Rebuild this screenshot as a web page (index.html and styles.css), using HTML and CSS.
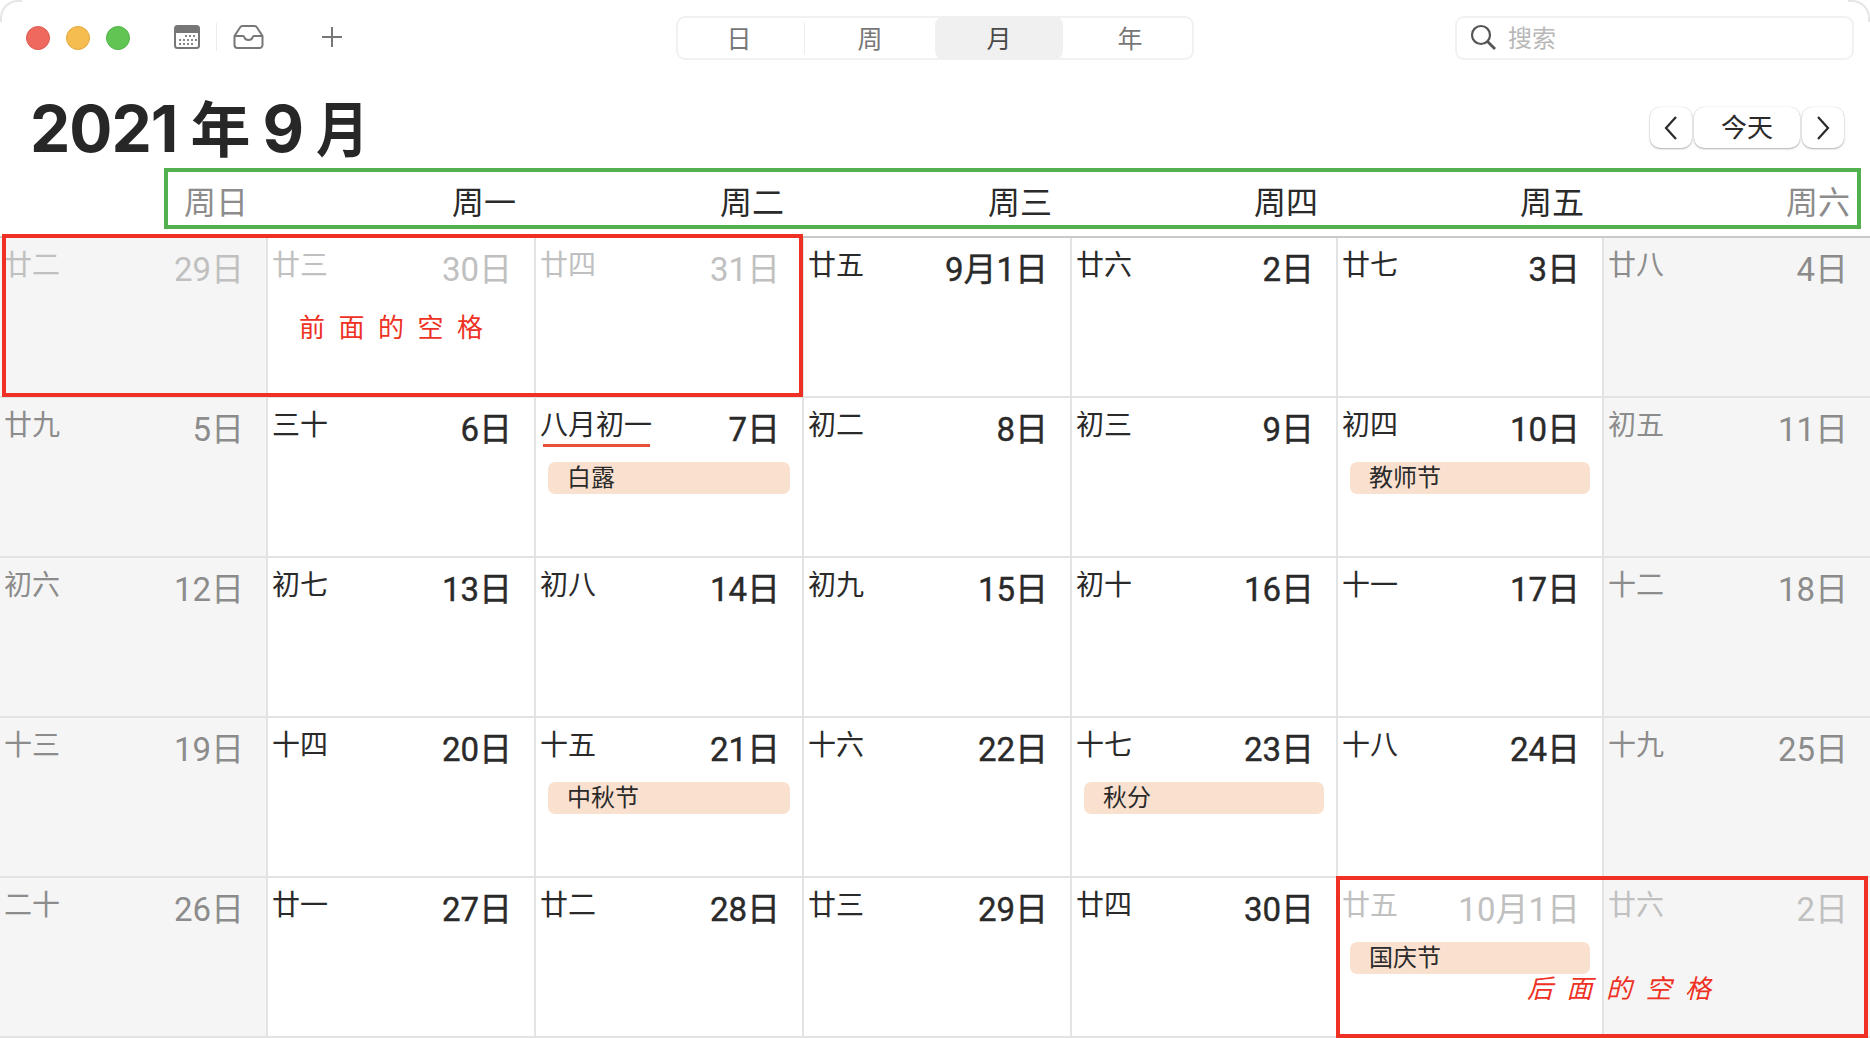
FILE: index.html
```html
<!DOCTYPE html>
<html lang="zh-CN">
<head>
    <meta charset="UTF-8">
    <title>日历</title>
    <link rel="stylesheet" href="styles.css">
</head>
<body>
    <div class="window">
        <!-- Toolbar -->
        <header class="toolbar">
            <div class="lights">
                <span class="light red"></span>
                <span class="light yellow"></span>
                <span class="light green"></span>
            </div>
            <div class="tools">
                <svg class="tool-calendar" width="26" height="24" viewBox="0 0 26 24">
                    <rect x="1" y="1" width="24" height="22" rx="2.5" fill="#fff" stroke="#777" stroke-width="2"/>
                    <path d="M1 8V3.500A2.500 2.500 0 0 1 3.500 1h19A2.500 2.500 0 0 1 25 3.500V8z" fill="#777"/>
                    <g fill="#888">
                        <rect x="11" y="10" width="2" height="2"/><rect x="15" y="10" width="2" height="2"/><rect x="19" y="10" width="2" height="2"/>
                        <rect x="5" y="14" width="2" height="2"/><rect x="9" y="14" width="2" height="2"/><rect x="13" y="14" width="2" height="2"/><rect x="17" y="14" width="2" height="2"/><rect x="21" y="14" width="2" height="2"/>
                        <rect x="5" y="18" width="2" height="2"/><rect x="9" y="18" width="2" height="2"/><rect x="13" y="18" width="2" height="2"/><rect x="17" y="18" width="2" height="2"/>
                    </g>
                </svg>
                <span class="tool-divider"></span>
                <svg class="tool-inbox" width="31" height="24" viewBox="0 0 31 24">
                    <path d="M1.500 11 7 2.500A3 3 0 0 1 9.500 1h12A3 3 0 0 1 24 2.500L29.500 11v9a3 3 0 0 1-3 3h-22a3 3 0 0 1-3-3z" fill="none" stroke="#777" stroke-width="2"/>
                    <path d="M1.500 11H10c1 0 1.200.6 1.500 1.500.5 1.700 2 2.500 4 2.500s3.500-.8 4-2.500c.3-.9.5-1.500 1.500-1.500h8.500" fill="none" stroke="#777" stroke-width="2"/>
                </svg>
                <svg class="tool-plus" width="22" height="22" viewBox="0 0 22 22">
                    <path d="M11 1v20M1 11h20" stroke="#777" stroke-width="2"/>
                </svg>
            </div>
            <nav class="views">
                <span class="view">日</span>
                <span class="view">周</span>
                <span class="view active">月</span>
                <span class="view">年</span>
            </nav>
            <div class="search">
                <svg width="26" height="26" viewBox="0 0 26 26">
                    <circle cx="11" cy="11" r="9" fill="none" stroke="#555" stroke-width="2.200"/>
                    <path d="M17.500 17.500 25 25" stroke="#555" stroke-width="2.800"/>
                </svg>
                <span class="search-text">搜索</span>
            </div>
        </header>

        <!-- Month title and today buttons -->
        <div class="title-row">
            <h1 class="title">2021<span class="title-cjk">年</span>9<span class="title-cjk month-char">月</span></h1>
            <div class="pager">
                <button class="page-btn">
                    <svg width="16" height="26" viewBox="0 0 16 26"><path d="M13 2 3 13l10 11" fill="none" stroke="#2a2a2a" stroke-width="2.200"/></svg>
                </button>
                <button class="page-btn today">今天</button>
                <button class="page-btn">
                    <svg width="16" height="26" viewBox="0 0 16 26"><path d="M3 2l10 11L3 24" fill="none" stroke="#2a2a2a" stroke-width="2.200"/></svg>
                </button>
            </div>
        </div>

        <!-- Week header -->
        <div class="weekdays">
            <span class="weekday off">周日</span>
            <span class="weekday">周一</span>
            <span class="weekday">周二</span>
            <span class="weekday">周三</span>
            <span class="weekday">周四</span>
            <span class="weekday">周五</span>
            <span class="weekday off">周六</span>
        </div>

        <!-- Month grid -->
        <div class="month">
            <div class="day weekend other"><div class="day-head"><span class="lunar">廿二</span><span class="date">29日</span></div></div>
            <div class="day other"><div class="day-head"><span class="lunar">廿三</span><span class="date">30日</span></div></div>
            <div class="day other"><div class="day-head"><span class="lunar">廿四</span><span class="date">31日</span></div></div>
            <div class="day"><div class="day-head"><span class="lunar">廿五</span><span class="date">9月1日</span></div></div>
            <div class="day"><div class="day-head"><span class="lunar">廿六</span><span class="date">2日</span></div></div>
            <div class="day"><div class="day-head"><span class="lunar">廿七</span><span class="date">3日</span></div></div>
            <div class="day weekend"><div class="day-head"><span class="lunar">廿八</span><span class="date">4日</span></div></div>

            <div class="day weekend"><div class="day-head"><span class="lunar">廿九</span><span class="date">5日</span></div></div>
            <div class="day"><div class="day-head"><span class="lunar">三十</span><span class="date">6日</span></div></div>
            <div class="day"><div class="day-head"><span class="lunar first">八月初一</span><span class="date">7日</span></div><div class="event">白露</div></div>
            <div class="day"><div class="day-head"><span class="lunar">初二</span><span class="date">8日</span></div></div>
            <div class="day"><div class="day-head"><span class="lunar">初三</span><span class="date">9日</span></div></div>
            <div class="day"><div class="day-head"><span class="lunar">初四</span><span class="date">10日</span></div><div class="event">教师节</div></div>
            <div class="day weekend"><div class="day-head"><span class="lunar">初五</span><span class="date">11日</span></div></div>

            <div class="day weekend"><div class="day-head"><span class="lunar">初六</span><span class="date">12日</span></div></div>
            <div class="day"><div class="day-head"><span class="lunar">初七</span><span class="date">13日</span></div></div>
            <div class="day"><div class="day-head"><span class="lunar">初八</span><span class="date">14日</span></div></div>
            <div class="day"><div class="day-head"><span class="lunar">初九</span><span class="date">15日</span></div></div>
            <div class="day"><div class="day-head"><span class="lunar">初十</span><span class="date">16日</span></div></div>
            <div class="day"><div class="day-head"><span class="lunar">十一</span><span class="date">17日</span></div></div>
            <div class="day weekend"><div class="day-head"><span class="lunar">十二</span><span class="date">18日</span></div></div>

            <div class="day weekend"><div class="day-head"><span class="lunar">十三</span><span class="date">19日</span></div></div>
            <div class="day"><div class="day-head"><span class="lunar">十四</span><span class="date">20日</span></div></div>
            <div class="day"><div class="day-head"><span class="lunar">十五</span><span class="date">21日</span></div><div class="event">中秋节</div></div>
            <div class="day"><div class="day-head"><span class="lunar">十六</span><span class="date">22日</span></div></div>
            <div class="day"><div class="day-head"><span class="lunar">十七</span><span class="date">23日</span></div><div class="event">秋分</div></div>
            <div class="day"><div class="day-head"><span class="lunar">十八</span><span class="date">24日</span></div></div>
            <div class="day weekend"><div class="day-head"><span class="lunar">十九</span><span class="date">25日</span></div></div>

            <div class="day weekend"><div class="day-head"><span class="lunar">二十</span><span class="date">26日</span></div></div>
            <div class="day"><div class="day-head"><span class="lunar">廿一</span><span class="date">27日</span></div></div>
            <div class="day"><div class="day-head"><span class="lunar">廿二</span><span class="date">28日</span></div></div>
            <div class="day"><div class="day-head"><span class="lunar">廿三</span><span class="date">29日</span></div></div>
            <div class="day"><div class="day-head"><span class="lunar">廿四</span><span class="date">30日</span></div></div>
            <div class="day other"><div class="day-head"><span class="lunar">廿五</span><span class="date">10月1日</span></div><div class="event">国庆节</div></div>
            <div class="day weekend other"><div class="day-head"><span class="lunar">廿六</span><span class="date">2日</span></div></div>
        </div>

        <!-- Annotations drawn over the calendar -->
        <div class="mark mark-week"></div>
        <div class="mark mark-before"></div>
        <div class="mark mark-after"></div>
        <span class="note note-before">前面的空格</span>
        <span class="note note-after">后面的空格</span>
    </div>
</body>
</html>
```

FILE: styles.css
```css
* {
    box-sizing: border-box;
}

html,
body {
    margin: 0;
    height: 100%;
    overflow: hidden;
    background-color: #ffffff;
}

.window {
    position: relative;
    width: 1870px;
    height: 1038px;
    padding-top: 16px;
    background-color: #ffffff;
    font-family: "Liberation Sans", "Noto Sans CJK SC", sans-serif;
    color: #2a2a2a;
}

/* Rounded window corners */
.window::before,
.window::after {
    content: "";
    position: absolute;
    top: 0;
    width: 20px;
    height: 20px;
    border-top: 2px solid #e6e6e6;
}

.window::before {
    left: 0;
    border-left: 2px solid #e6e6e6;
    border-top-left-radius: 18px;
}

.window::after {
    right: 0;
    border-right: 2px solid #e6e6e6;
    border-top-right-radius: 18px;
}

/* Toolbar */
.toolbar {
    display: flex;
    align-items: center;
    height: 44px;
}

.lights {
    display: flex;
    gap: 16px;
    margin-left: 26px;
}

.light {
    width: 24px;
    height: 24px;
    border-radius: 50%;
}

.light.red {
    background-color: #ee6a5f;
    border: 1px solid #dd5a50;
}

.light.yellow {
    background-color: #f5bd4f;
    border: 1px solid #e0a83e;
}

.light.green {
    background-color: #61c554;
    border: 1px solid #55b049;
}

.tools {
    display: flex;
    align-items: center;
    margin-left: 44px;
    margin-bottom: 2px;
}

.tool-divider {
    width: 1px;
    height: 28px;
    margin: 0 16px;
    background-color: #ececec;
}

.tool-plus {
    margin-left: 57px;
}

.views {
    display: flex;
    width: 518px;
    height: 44px;
    margin-left: 333px;
    border: 2px solid #f1f1f1;
    border-radius: 9px;
}

.view {
    display: flex;
    align-items: center;
    justify-content: center;
    width: 128px;
    margin: -2px 0;
    padding-bottom: 3px;
    font-size: 25px;
    color: #777777;
}

.view:first-child {
    width: 127px;
    padding-right: 5px;
    background: linear-gradient(#ececec, #ececec) right center / 1px 32px no-repeat;
}

.view:nth-child(2) {
    width: 130px;
}

.view:last-child {
    width: 129px;
    padding-left: 5px;
}

.view.active {
    background-color: #f0f0f0;
    border-radius: 9px;
    color: #4a4a4a;
}

.search {
    display: flex;
    align-items: center;
    gap: 12px;
    width: 399px;
    height: 44px;
    margin-left: 261px;
    padding: 0 0 3px 13px;
    border: 2px solid #f1f1f1;
    border-radius: 9px;
}

.search-text {
    font-size: 24px;
    color: #b8b8b8;
}

/* Title row */
.title-row {
    display: flex;
    justify-content: space-between;
    height: 123px;
    padding: 34px 26px 0 30px;
}

.title {
    margin: 0;
    font-family: Inter, "Noto Sans CJK SC", sans-serif;
    font-size: 64px;
    line-height: 70px;
    font-weight: 700;
    letter-spacing: -1px;
    color: #272727;
}

.title-cjk {
    margin: 0 13px;
    font-size: 60px;
}

.month-char {
    display: inline-block;
    transform: scaleX(0.88);
    transform-origin: left center;
}

.pager {
    display: flex;
    gap: 2px;
    height: 41px;
    margin-top: 13px;
}

.page-btn {
    display: flex;
    align-items: center;
    justify-content: center;
    width: 42px;
    padding: 0;
    border: none;
    border-radius: 10px;
    background-color: #ffffff;
    box-shadow: 0 1px 2px rgba(0, 0, 0, 0.3), 0 0 1px rgba(0, 0, 0, 0.2);
    font-family: inherit;
    font-size: 26px;
    color: #2a2a2a;
}

.page-btn.today {
    width: 106px;
    padding-bottom: 4px;
}

/* Week header */
.weekdays,
.month {
    display: grid;
    grid-template-columns: 268px 268px 268px 268px 266px 266px 266px;
}

.weekdays {
    height: 53px;
    align-items: start;
}

.weekday {
    padding-right: 20px;
    text-align: right;
    font-size: 32px;
    line-height: 40px;
    color: #2a2a2a;
}

.weekday.off {
    color: #8c8c8c;
}

/* Month grid */
.month {
    border-top: 2px solid #c9c9c9;
}

.day {
    height: 160px;
    border-right: 2px solid #e3e3e3;
    border-bottom: 2px solid #e3e3e3;
}

.day:nth-child(7n) {
    border-right: none;
}

.day.weekend {
    background-color: #f5f5f5;
}

.day-head {
    display: flex;
    justify-content: space-between;
    height: 64px;
    padding: 10px 22px 0 4px;
}

.lunar {
    position: relative;
    height: 38px;
    font-size: 28px;
    line-height: 36px;
}

.lunar.first::after {
    content: "";
    position: absolute;
    left: 3px;
    right: 2px;
    bottom: -1px;
    height: 3px;
    background-color: #e8503a;
}

.date {
    margin-top: 3px;
    font-family: Roboto, "Noto Sans CJK SC", sans-serif;
    font-size: 33px;
    line-height: 38px;
    -webkit-text-stroke: 0.4px #2a2a2a;
}

.day.weekend .lunar,
.day.weekend .date {
    color: #8c8c8c;
    -webkit-text-stroke: 0;
}

.day.other .lunar,
.day.other .date {
    color: #c0c0c0;
    -webkit-text-stroke: 0;
}

.event {
    height: 32px;
    margin: 0 12px;
    padding-left: 19px;
    border-radius: 7px;
    background-color: #fae1cf;
    font-size: 24px;
    line-height: 31px;
    color: #2a2a2a;
}

/* Annotations */
.mark {
    position: absolute;
    border-style: solid;
    border-width: 4px;
    pointer-events: none;
}

.mark-week {
    left: 164px;
    top: 168px;
    width: 1697px;
    height: 61px;
    border-color: #52b04f;
}

.mark-before {
    left: 2px;
    top: 234px;
    width: 801px;
    height: 163px;
    border-color: #ee3124;
}

.mark-after {
    left: 1336px;
    top: 876px;
    width: 532px;
    height: 162px;
    border-color: #ee3124;
}

.note {
    position: absolute;
    font-size: 26px;
    line-height: 30px;
    letter-spacing: 13.5px;
    white-space: nowrap;
    color: #ee3124;
}

.note-before {
    left: 299px;
    top: 313px;
}

.note-after {
    left: 1527px;
    top: 974px;
    font-style: italic;
}
```
